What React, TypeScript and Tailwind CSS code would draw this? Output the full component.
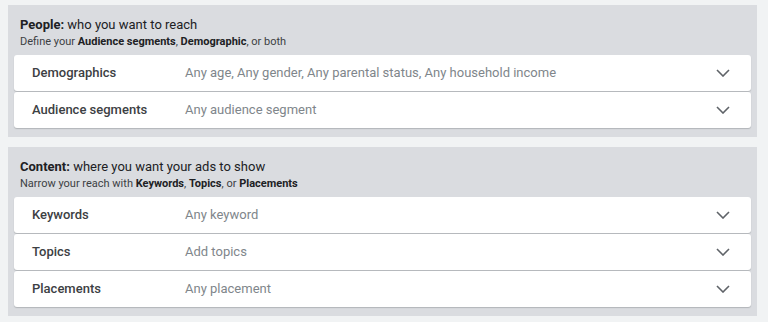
type Row = { label: string; value: string }

const people: Row[] = [
  { label: 'Demographics', value: 'Any age, Any gender, Any parental status, Any household income' },
  { label: 'Audience segments', value: 'Any audience segment' },
]

const content: Row[] = [
  { label: 'Keywords', value: 'Any keyword' },
  { label: 'Topics', value: 'Add topics' },
  { label: 'Placements', value: 'Any placement' },
]

function Chevron() {
  return (
    <svg width="14" height="8" viewBox="0 0 14 8" fill="none" className="text-[#5f6368]">
      <path d="M1 1l6 6 6-6" stroke="currentColor" strokeWidth="1.6" />
    </svg>
  )
}

function Section({ title, rest, hint, rows }: { title: string; rest: string; hint: React.ReactNode; rows: Row[] }) {
  return (
    <div className="bg-[#dadce0] px-[6px] pb-[9px]">
      <div className="pl-[6px] pt-[11px] pb-[6px]">
        <div className="text-[13px] leading-[18px] text-[#202124]">
          <span className="font-bold">{title}</span> {rest}
        </div>
        <div className="text-[11px] leading-[15px] text-[#3c4043]">{hint}</div>
      </div>
      <div className="flex flex-col gap-px">
        {rows.map((r) => (
          <div
            key={r.label}
            className="flex items-center h-[36px] bg-white rounded-[3px] shadow-[0_1px_1px_rgba(60,64,67,0.25)] pl-[18px] pr-[21px]"
          >
            <div className="w-[153px] text-[13px] text-[#3c4043] font-medium">{r.label}</div>
            <div className="flex-1 text-[13px] text-[#80868b]">{r.value}</div>
            <Chevron />
          </div>
        ))}
      </div>
    </div>
  )
}

export default function App() {
  return (
    <div className="min-h-screen bg-[#f1f3f4] pl-[8px] pr-[11px] pt-[5px] font-['Roboto',sans-serif]">
      <div className="flex flex-col gap-[10px]">
        <Section
          title="People:"
          rest="who you want to reach"
          rows={people}
          hint={
            <>
              Define your <b className="text-[#202124]">Audience segments</b>, <b className="text-[#202124]">Demographic</b>, or both
            </>
          }
        />
        <Section
          title="Content:"
          rest="where you want your ads to show"
          rows={content}
          hint={
            <>
              Narrow your reach with <b className="text-[#202124]">Keywords</b>, <b className="text-[#202124]">Topics</b>, or{' '}
              <b className="text-[#202124]">Placements</b>
            </>
          }
        />
      </div>
    </div>
  )
}
